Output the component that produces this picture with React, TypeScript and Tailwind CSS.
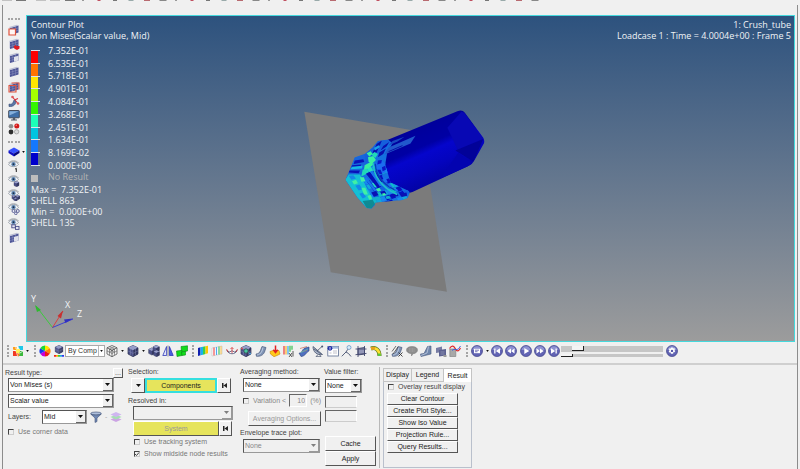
import React from 'react';

const ink = '#43486e';

/* ---------- icon drawings (12 x 12 grid) ---------- */

const Cube = ({ x = 0, y = 0, s = 1, lines = true }: { x?: number; y?: number; s?: number; lines?: boolean }) => (
  <g transform={`translate(${x} ${y}) scale(${s})`}>
    <path d="M6 .5 11 2.8V9L6 11.7 1 9V2.8Z" fill="#4b5088" stroke="#2d3050" strokeWidth=".7" />
    <path d="M6 .5 11 2.8 6 5.2 1 2.8Z" fill="#9aa0cc" />
    <path d="M6 5.2 11 2.8V9L6 11.7Z" fill="#343861" />
    {lines && (
      <path
        d="M1 5.9l5 2.5 5-2.5M3.5 4v6.3M8.5 4v6.3M3.5 1.7l5 2.3M8.5 1.7l-5 2.3M6 5.2v6.3"
        stroke="#8f94c0"
        strokeWidth=".4"
        fill="none"
      />
    )}
  </g>
);

const Sheet = ({ fill = '#4d5496' }: { fill?: string }) => (
  <g>
    <path d="M2 4 10.5 1.5V8.5L2 11Z" fill={fill} />
    <path d="M2 4 10.5 1.5 9 .8 1 3Z" fill="#b9bcd2" />
    <path d="M2 4v7L1 9.500V3Z" fill="#d4d6e4" />
    <path d="M4.8 3.2v7M7.6 2.4v7M2 6.3l8.5-2.4M2 8.6l8.5-2.4" stroke="#9ea3cc" strokeWidth=".4" />
  </g>
);

const Eye = () => (
  <g>
    <path d="M.5 4.5C2.5 1 8.5.5 10.5 4.5 8.5 7.3 2.5 7.3.5 4.5Z" fill="#eef1f5" stroke="#8d949e" strokeWidth=".8" />
    <circle cx="5.5" cy="4.2" r="2.1" fill="#5e87b4" />
    <circle cx="5.5" cy="4.2" r=".9" fill="#1c2c44" />
    <path d="M.5 3C2.5.2 8.5 0 10.5 3" fill="none" stroke="#8a8f98" strokeWidth=".8" />
  </g>
);

const Elbow = () => (
  <g>
    <path d="M1 9C3 9 4.500 8 5.500 5.500L7 1.500 11 2.500 9.500 7C8 10.500 5 11.500 1.500 11.300Z" fill="#7f93b5" stroke="#4b5a7c" strokeWidth=".7" />
    <path d="M8 2.500 7 6C5.500 9 4 9.800 2 10" fill="none" stroke="#c3d0e4" strokeWidth=".9" />
  </g>
);

const Disc = ({ children }: { children: React.ReactNode }) => (
  <g>
    <circle cx="6" cy="6" r="5.5" fill="#6264b4" stroke="#3c3f86" strokeWidth=".7" />
    <path d="M1.5 5A4.6 4.6 0 0 1 10.5 5Z" fill="#8f92d2" />
    <g fill="#fff">{children}</g>
  </g>
);

const art: Record<string, React.ReactNode> = {
  sheetFrame: <g><Sheet /><path d="M1 5h6.5v6H1Z" fill="#fff6f3" stroke="#e0523c" strokeWidth="1.2" /></g>,
  sheetRed: <g><Sheet /><path d="M5.5 8.5 8 6.8V8h3.5v2.5L9 12 6.5 10.8Z" fill="#dd1c22" /></g>,
  sheetHalf: <g><Sheet /><path d="M6 5 10.5 3.8V8.5L6 9.8Z" fill="#dfe0ea" /></g>,
  sheet: <Sheet />,
  sheetBox: <g><Sheet /><path d="M1 4.5h7v6.5H1ZM3.5 2H11v6.5" fill="none" stroke="#e0523c" strokeWidth="1.1" /></g>,
  arm: (
    <g>
      <path d="M1 9c3 1 4-1 5-4l2 1c0 3-2 6-7 5.5Z" fill="#5b76a8" stroke="#34496f" strokeWidth=".6" />
      <path d="M4.5 2 9.5 8M6.5 5 10 3.5" stroke="#d2303a" strokeWidth="1.1" />
      <circle cx="4.5" cy="2" r="1.3" fill="#e05a5a" /><circle cx="10" cy="8.5" r="1.3" fill="#e05a5a" />
    </g>
  ),
  monitor: (
    <g>
      <rect x=".7" y="1.5" width="10.6" height="7.3" rx=".6" fill="#3f6fa8" stroke="#3a4150" strokeWidth=".9" />
      <path d="M1.3 2.2h9.4L1.3 6.5Z" fill="#86b0dc" />
      <path d="M4.8 8.8h2.4v1.6H9v1H3v-1h1.800Z" fill="#565d68" />
    </g>
  ),
  balls: (
    <g>
      <circle cx="3" cy="3.3" r="2.3" fill="#8e8e8e" /><circle cx="8.8" cy="3" r="2.5" fill="#d21919" />
      <circle cx="3" cy="9" r="2.400" fill="#2e2e2e" /><circle cx="8.6" cy="8.8" r="2.2" fill="#dcdcdc" stroke="#777" strokeWidth=".5" />
      <circle cx="8.200" cy="2.2" r=".7" fill="#ff9d9d" />
    </g>
  ),
  gem: (
    <g>
      <path d="M6 1.500 11.500 4.500 6 7.500 .5 4.500Z" fill="#3450ff" />
      <path d="M.5 4.500 6 7.500V10.500L.5 7Z" fill="#1212c4" /><path d="M11.500 4.500 6 7.500V10.500L11.500 7Z" fill="#06067e" />
    </g>
  ),
  eyeOne: <g><Eye /><path d="M7 9.200 8.300 8.300V12" stroke="#222" strokeWidth="1" fill="none" /></g>,
  eyeCube: <g><Eye /><Cube x={5.5} y={6} s={0.5} lines={false} /></g>,
  eyeCubes: <g><Eye /><Cube x={3.5} y={6} s={0.4} lines={false} /><Cube x={7.5} y={6} s={0.4} lines={false} /><Cube x={5.5} y={8.2} s={0.35} lines={false} /></g>,
  eyeRings: (
    <g><Eye /><g fill="#e6e7f3" stroke="#484d88" strokeWidth=".8"><circle cx="5.500" cy="8" r="1.500" /><circle cx="9.800" cy="8" r="1.500" /><circle cx="7.800" cy="10.400" r="1.300" /></g></g>
  ),
  eyeSwap: <g><Eye /><g fill="#e6e7f3" stroke="#484d88" strokeWidth=".9"><rect x="3.800" y="6.800" width="3.500" height="3" /><rect x="7.500" y="8.400" width="3.500" height="3" /></g></g>,
  contourMesh: (
    <g>
      <path d="M1 2h4v3H1Z" fill="#ff9c1c" /><path d="M6 1h5v4H8Z" fill="#20c8e8" /><path d="M1 6h3l1 5H1Z" fill="#f23a24" />
      <path d="M4 4h4v4H4Z" fill="#fff35a" /><path d="M8 6h3v5H7Z" fill="#3cb83c" /><path d="M5 8l3 1-2 3Z" fill="#ff7b1c" />
      <path d="M4 0v4M8 8l3-2M1 5l3 1M6 1l-1 3" stroke="#fff" strokeWidth=".8" />
    </g>
  ),
  wheel: (
    <g>
      <path d="M6 6V.5A5.500 5.500 0 0 1 10.800 3.200Z" fill="#ffe600" /><path d="M6 6 10.800 3.200A5.500 5.500 0 0 1 10.800 8.800Z" fill="#ff8a00" />
      <path d="M6 6 10.800 8.800A5.500 5.500 0 0 1 6 11.500Z" fill="#f01818" /><path d="M6 6V11.500A5.500 5.500 0 0 1 1.200 8.800Z" fill="#c800d8" />
      <path d="M6 6 1.200 8.800A5.500 5.500 0 0 1 1.200 3.200Z" fill="#1838f0" /><path d="M6 6 1.200 3.200A5.500 5.500 0 0 1 6 .5Z" fill="#18d838" />
    </g>
  ),
  cubePalette: (
    <g>
      <Cube x={1.5} s={0.75} />
      <path d="M1 10h2v1.700H1Z" fill="#e22" /><path d="M3 10h2v1.700H3Z" fill="#fa0" /><path d="M5 10h2v1.700H5Z" fill="#3c3" />
      <path d="M7 10h2v1.700H7Z" fill="#2ad" /><path d="M9 10h2v1.700H9Z" fill="#33e" />
    </g>
  ),
  wireCube: (
    <g fill="none" stroke="#444" strokeWidth=".7">
      <path d="M6 .5 11 2.800V9L6 11.700 1 9V2.800ZM1 2.800l5 2.400 5-2.400M6 5.200v6.500" />
      <path d="M1 5.900l5 2.500 5-2.500M3.500 1.700l5 2.400v6M8.500 1.700l-5 2.400v6M3.500 7.200l5-3M8.500 7.200l-5-3" strokeWidth=".5" />
    </g>
  ),
  cube: <Cube />,
  cubes: <g><Cube y={2.5} s={0.65} lines={false} /><Cube x={4.5} y={0} s={0.62} lines={false} /><Cube x={5} y={5} s={0.58} lines={false} /></g>,
  mirror: <g><path d="M4.600 1.500V10.500H.8Z" fill="#dfe4fb" stroke="#3038b8" strokeWidth=".8" /><path d="M7.400 1.500V10.500h3.800Z" fill="#4a5ce0" stroke="#3038b8" strokeWidth=".8" /><path d="M6 .5v11" stroke="#555" strokeWidth=".6" /></g>,
  greens: <g fill="#12dc1c" stroke="#0a8a12" strokeWidth=".6"><path d="M5 1.500 11.500.8V6L5.500 7Z" /><path d="M.5 6 6 5.300V10.500L1 11.500Z" /><path d="M5.500 7 9.500 6.300V10L6 10.500Z" /></g>,
  bands: (
    <g><path d="M1 3 3.500 2.300V10.300L1 11Z" fill="#1020b0" /><path d="M3.500 2.300 6 1.800V9.700L3.500 10.300Z" fill="#18b0f0" /><path d="M6 1.800 8.500 1.300V9L6 9.700Z" fill="#38d048" /><path d="M8.500 1.300 11 .8V8.300L8.500 9Z" fill="#ffc800" /></g>
  ),
  isoBands: (
    <g><path d="M1 3 11 1V9L1 11Z" fill="#fff" stroke="#bbb" strokeWidth=".5" /><path d="M3 2.600v8" stroke="#f05050" strokeWidth="1.200" /><path d="M5.500 2v8" stroke="#50a8f0" strokeWidth="1.200" /><path d="M8 1.600v8" stroke="#48c058" strokeWidth="1.200" /><path d="M10 1.200v8" stroke="#f0b838" strokeWidth="1" /></g>
  ),
  vector: <g><path d="M.8 5.500C3 9.800 9 9.800 11.200 5.500L8.500 7 6 5.800 3.500 7Z" fill="#fff" stroke="#4a4a70" strokeWidth=".8" /><path d="M.5 4l1.500 3M6 2.500V8M11.500 4 10 7M4.500 4 6 2.500 7.500 4" stroke="#d83838" strokeWidth=".8" fill="none" /></g>,
  tensor: <g><Cube /><circle cx="6" cy="6" r="2.200" fill="#48c8a0" stroke="#223" strokeWidth=".6" /><circle cx="2" cy="3.500" r="1" fill="#e05858" /><circle cx="10" cy="8.500" r="1" fill="#58a8e0" /></g>,
  elbow: <Elbow />,
  iso: <g><path d="M1 6.500 4 5.500H10L11 9 8 10.500 5 11.700 1.500 9Z" fill="#ffc81c" stroke="#c88400" strokeWidth=".6" /><path d="M6.500.5v6.500M4.300 4.800l2.200 2.700 2.200-2.700" stroke="#e02020" strokeWidth="1.500" fill="none" /></g>,
  bandsFx: <g><path d="M1 1v8.500" stroke="#e83838" strokeWidth="1.200" /><path d="M3 1v8.500" stroke="#ffb828" strokeWidth="1.200" /><path d="M5 1v8.500" stroke="#38a8f0" strokeWidth="1.200" /><path d="M7 .8v6M9 .8v4" stroke="#38c050" strokeWidth="1.200" /><path d="M6 8l3 4M9 8l-3 4M10 6v5.500" stroke="#333" strokeWidth=".8" /></g>,
  deform: <g><path d="M1 8c3 1 3-4 6-5l4-1v4C8 7 8 11 3 11.500Z" fill="#5070c0" stroke="#28407c" strokeWidth=".6" /><path d="M2 3.500 9 1.500M4 6.500l5-1" stroke="#c86858" strokeWidth=".7" /><path d="M3 7.500l7-3.500" stroke="#58b8b0" strokeWidth=".9" /></g>,
  dish: <g><path d="M1 1.500C1 7 5 10.500 10.500 9.500Z" fill="#a9b4c8" stroke="#4a5670" strokeWidth=".8" /><path d="M5 6l5-4.500M6 9.500 4 11.700h5L7.500 9.500M2 4l7 5" stroke="#4a5670" strokeWidth=".8" fill="none" /><circle cx="10.200" cy="1.600" r="1" fill="#4a5670" /></g>,
  windowInfo: <g><rect x=".8" y="1.500" width="10.600" height="9.500" fill="#fff" stroke="#5b6c90" strokeWidth=".8" /><path d="M.8 1.500h10.600v2.200H.8Z" fill="#a8bce0" /><path d="M6 6h4M6 8h4M2.500 8h2" stroke="#99a" strokeWidth=".6" /><circle cx="3" cy="3.300" r="2.400" fill="#2430a8" /><path d="M3 2v2.700" stroke="#fff" strokeWidth=".8" /></g>,
  runner: <g fill="none"><circle cx="8" cy="2.500" r="2" stroke="#6a98c8" fill="#d8ecfa" strokeWidth=".8" /><path d="M6.800 4.300 5 7l2.500 1.500 2.500 3M5 7 3 9 .8 11.300" stroke="#56607c" strokeWidth="1" /></g>,
  nodes: <g><path d="M3 3.500 9.500 2.500V9L3 10Z" fill="#9498b8" stroke={ink} strokeWidth=".9" /><path d="M3 1v11M.5 4h11M9.500 1v10M.5 9.700l11-1.300" stroke={ink} strokeWidth=".9" /></g>,
  hose: <g fill="none"><path d="M1 3.500C6 2 9.500 5 9.500 11" stroke="#55751c" strokeWidth="4" /><path d="M1 3.500C6 2 9.500 5 9.500 11" stroke="#ffe030" strokeWidth="2.800" /><path d="M1 3.500c1.500-.5 3-.4 4 .1" stroke="#e8a020" strokeWidth="2.800" /><path d="M9.300 8.500 9.500 11" stroke="#58c838" strokeWidth="2.800" /></g>,
  elbowX: <g><Elbow /><path d="M1 6.500 5 1M2 9 7 2" stroke="#333" strokeWidth=".7" /><path d="M7.500 7.500l4 4M11.500 7.500l-4 4" stroke="#333" strokeWidth=".9" /></g>,
  note: <g><path d="M6 1.500C9.500 1.500 11.500 3 11.500 5S9.500 8.700 7 8.700L5.500 11V8.700C2.500 8.500.5 7 .5 5S2.500 1.500 6 1.500Z" fill="#8d8d8d" stroke="#777" strokeWidth=".5" /><path d="M3 4h6M3 6h6" stroke="#b4b4b4" strokeWidth=".7" strokeDasharray="1 .5" /></g>,
  ramp: <g><path d="M.5 9 4 8.500 7.500 1.500l3.500-.5v8L1 11.500Z" fill="#6f86ac" stroke="#46587c" strokeWidth=".6" /><path d="M8.500 1.500 7 8 1 10.500" stroke="#c0cce0" strokeWidth=".8" fill="none" /></g>,
  camera: <g><path d="M1 3 7 1.500V7L1 8Z" fill="#777ca4" /><path d="M4 5 11 4V10.500L4 11.500Z" fill="#5c6190" /><path d="M5.500 7h4M5.500 9h4" stroke="#a8abc8" strokeWidth=".6" /><path d="M8.500 10h3v2h-3Z" fill="#999" /></g>,
  curve: <g><path d="M.8 4h6v7.500h-6Z" fill="#a8a8a8" stroke="#7a7a7a" strokeWidth=".6" /><path d="M.5 3.500C3-.5 5 1 6.500 4S10 6.500 11.500 3" stroke="#e02828" strokeWidth="1.200" fill="none" /><path d="M3 5.500c3-3 5 2 8.500-4.500" stroke="#3858e0" strokeWidth=".9" fill="none" /></g>,
  film: <Disc><path d="M3 3.800h6v4.400H3Z" /><path d="M4 5.200h4M4 6.700h2.500" stroke="#5557a8" strokeWidth=".8" /></Disc>,
  first: <Disc><path d="M3.200 3.500h1.300v5H3.200ZM9 3.200v5.600L4.800 6Z" /></Disc>,
  rewind: <Disc><path d="M6 3.500v5L2.300 6ZM9.500 3.500v5L6 6Z" /></Disc>,
  play: <Disc><path d="M4.300 3v6L9.300 6Z" /></Disc>,
  forward: <Disc><path d="M6 3.500v5L9.700 6ZM2.500 3.500v5L6 6Z" /></Disc>,
  last: <Disc><path d="M7.500 3.500h1.300v5H7.500ZM3 3.200v5.600L7.200 6Z" /></Disc>,
  gear: <Disc><path d="M5.300 2.500h1.400l.3 1 1.200-.4.8 1.100-.7.900 1 .900-.8 1.300-1.100-.1-.3 1.500H4.900l-.2-1.300-1.300.1-.7-1.200.9-1-.7-.9.7-1.200 1.200.4Z" /><circle cx="6" cy="5.900" r="1.200" fill="#5557a8" /></Disc>,
  funnel: <g><ellipse cx="6" cy="2.500" rx="5.300" ry="1.500" fill="#aebfdc" stroke="#4a5c80" strokeWidth=".7" /><path d="M.7 3 5 7v4.500l2-1V7L11.300 3C9 4.500 3 4.500.7 3Z" fill="#6f88b4" stroke="#43557a" strokeWidth=".6" /></g>,
  layers: <g opacity=".75"><path d="M6 6 11.500 8.500 6 11 .5 8.500Z" fill="#c08be0" /><path d="M6 3.500 11.500 6 6 8.500 .5 6Z" fill="#8fd8a0" /><path d="M6 1 11.500 3.500 6 6 .5 3.500Z" fill="#c4a3f0" /></g>,
};

const Glyph = ({ name }: { name: string }) => (
  <svg viewBox="0 0 12 12" className="size-3 shrink-0" aria-hidden="true">{art[name]}</svg>
);

const Tool = ({ name }: { name: string }) => (
  <button type="button" aria-label={name} className="flex size-3 shrink-0 items-center justify-center">
    <Glyph name={name} />
  </button>
);

const Arrow = ({ faded = false }: { faded?: boolean }) => (
  <svg viewBox="0 0 5 3" className={faded ? 'h-[3px] w-[5px] shrink-0 opacity-50' : 'h-[3px] w-[5px] shrink-0'} aria-hidden="true">
    <path d="M0 0h5L2.500 3Z" fill="#111" />
  </svg>
);

const MiniArrow = () => (
  <svg viewBox="0 0 5 3" className="h-[2px] w-[5px] shrink-0" aria-hidden="true">
    <path d="M.5 0h4L2.500 3Z" fill="#111" />
  </svg>
);

const Grip = () => <div className="h-3 shrink-0 border-l-2 border-dotted border-[#a4a4a4]" />;
const SideGrip = () => <div className="w-3 shrink-0 border-t-2 border-dotted border-[#a4a4a4]" />;

/* ---------- form pieces ---------- */

const Combo = ({ label, value, className, disabled = false }: { label: string; value: string; className: string; disabled?: boolean }) => (
  <div className={`relative flex h-[14px] ${className}`}>
    <select
      aria-label={label}
      disabled={disabled}
      className={`h-full w-full appearance-none border border-t-[#555] border-l-[#555] border-r-[#999] border-b-[#999] px-px leading-3 ${disabled ? 'bg-[#f0f0f0] text-[#888]' : 'bg-white text-[#222]'}`}
    >
      <option>{value}</option>
    </select>
    <span className={`pointer-events-none absolute inset-y-px right-px flex w-[10px] items-center justify-center border-r border-b bg-[#f0f0f0] ${disabled ? 'border-[#999]' : 'border-[#666]'}`}>
      <Arrow faded={disabled} />
    </span>
  </div>
);

const bevel = 'border border-t-white border-l-white border-r-[#555] border-b-[#555]';
const picked = 'border-2 border-[#35dfdf]';

const Push = ({ children, className = '', label, edge = bevel }: { children: React.ReactNode; className?: string; label?: string; edge?: string }) => (
  <button type="button" aria-label={label} className={`flex shrink-0 items-center justify-center whitespace-nowrap ${edge} ${className}`}>
    {children}
  </button>
);

const Tick = ({ label, checked = false, className = 'text-[#777]' }: { label: string; checked?: boolean; className?: string }) => (
  <label className={`flex items-center gap-1 whitespace-nowrap ${className}`}>
    <span className="relative flex size-[6px]">
      <input type="checkbox" defaultChecked={checked} className="size-full appearance-none border border-t-[#444] border-l-[#444] border-r-[#ccc] border-b-[#ccc]" />
      {checked && (
        <svg viewBox="0 0 6 6" className="pointer-events-none absolute inset-0" aria-hidden="true">
          <path d="M1 3l1.500 1.500L5 1.500" fill="none" stroke="#444" />
        </svg>
      )}
    </span>
    {label}
  </label>
);

const SkipBack = () => (
  <svg viewBox="0 0 5 5" className="size-[5px]" aria-hidden="true"><path d="M0 0h1.500v5H0ZM5 0v5L1.500 2.500Z" fill="#222" /></svg>
);

/* ---------- scene ---------- */

const tones = ['#0710c0', '#1263e0', '#1788ee', '#12a8dc', '#10bcc8', '#25e0c0'];

/* Small shell elements scattered over the folded faces. */
const patches = (() => {
  let seed = 29;
  const rnd = () => ((seed = (seed * 16807) % 2147483647) / 2147483647);
  const out: { d: string; fill: string }[] = [];
  for (let i = 0; i < 13; i++) {
    for (let j = 0; j < 9; j++) {
      const x = 22 + i * 14 + j * 9;
      const y = 124 - i * 4 + j * 14;
      const r = rnd();
      if (r < 0.35) continue;
      const front = x < 95;
      const pick = front ? 2 + Math.floor(rnd() * 4) : Math.floor(rnd() * 5);
      out.push({ d: `M${x} ${y}l13 -5 8 12 -13 5Z`, fill: tones[pick] });
    }
  }
  return out;
})();

const Crumple = () => (
  <g transform="translate(340 132) scale(.3333)">
    <clipPath id="fold">
      <path d="M14 142 28 110 42 75 72 64 96 45 112 25 142 21 156 32 140 60 134 96 150 150 205 176 208 180 202 196 185 203 104 210 103 218 92 229 78 227 50 195Z" />
    </clipPath>
    <g clipPath="url(#fold)">
      <path d="M0 0h220v240H0Z" fill="#1470e0" />
      {patches.map((p, i) => <path key={i} d={p.d} fill={p.fill} />)}
      <path d="M28 110 42 75 72 64 84 80 64 124 24 126Z" fill="#1766dc" />
      <path d="M42 84l26-4 3 8-32 6ZM34 98l28-2-2 6-28 3ZM26 114l32 0-4 8-30-2Z" fill="#0912ba" />
      <path d="M34 103 66 100 64 108 30 110Z" fill="#16b8e4" />
      <path d="M72 66 96 45 112 25 142 21 150 28 120 52 104 74 90 92 74 90Z" fill="#1560dc" />
      <path d="M108 34 124 24 118 38 102 48ZM128 40 146 28 138 42 120 54ZM98 54l16-8-6 14-14 8ZM116 60l20-12-8 16-16 10Z" fill="#0810b0" />
      <path d="M100 46l14-8 4 5-14 10Z" fill="#18a0e8" />
      <path d="M78 62l12-6 6 8-10 8ZM82 74l16-4 8 12-10 10-12-4ZM72 98l18-10 10 6-16 14-14 4Z" fill="#38f0a0" />
      <path d="M66 112l14-4-2 16-16 8ZM92 66l10-8 10 6-8 12Z" fill="#20d8b8" />
      <path d="M14 142 24 126 58 126 70 150 96 200 92 229 78 227 50 195Z" fill="#14c0d4" />
      <path d="M24 130l14-2 8 10-14 4ZM44 160l12-4 10 14-12 4ZM56 184l12-4 8 14-10 4Z" fill="#1488e8" />
      <path d="M34 146l12-4 6 10-12 4ZM58 134l12 0 4 12-12 2ZM62 166l12 0 8 20-12 0ZM80 190l10-2 6 12-10 2Z" fill="#40f0a4" />
      <path d="M66 206 96 202 103 214 92 229 78 227Z" fill="#0f8a94" />
      <path d="M76 124l12-6 34 44-10 6ZM94 118l10-4 22 34-8 4ZM78 146l8-3 26 34-8 4Z" fill="#0710b4" />
      <path d="M88 118l8-4 28 44-6 4ZM72 138l6-4 32 42-6 4Z" fill="#1874ec" />
      <path d="M92 180l14-4 8 12-14 5ZM118 178l14-3 6 8-14 4ZM150 186l20-3 4 8-18 3ZM178 184l20-4 2 10-16 4Z" fill="#0912b4" />
      <path d="M92 196l24-4 6 8-24 4ZM134 192l12-2 6 8-14 2Z" fill="#12b0cc" />
      <path d="M106 170l10-4 6 8-10 4ZM124 184l8-2 4 6-8 2Z" fill="#40f0a4" />
    </g>
    <path d="M106 92 124 84 134 96 134 120 124 124 108 112Z" fill="#1c6cf0" />
    <path d="M112 84l12-2-2 10-12 4ZM124 104l10-4 2 12-10 4ZM110 112l10 0 6 14-10-2Z" fill="#0a18c8" />
    <path d="M98 92C98 128 122 166 170 186" fill="none" stroke="#20c0c8" strokeWidth="5" />
    <path d="M104 94C106 130 130 160 176 178" fill="none" stroke="#0a3cb8" strokeWidth="4" />
    <path d="M124 130l12 8 6 12-10-2ZM140 152l10 4 8 10-12-4ZM160 168l10 2 4 8-10-3Z" fill="#1c6cf0" />
  </g>
);

const Scene = () => (
  <svg viewBox="26 15 768 326" className="absolute inset-0 size-full" role="img" aria-label="Von Mises contour on crushed tube">
    <defs>
      <linearGradient id="tube" x1="415" y1="125" x2="440" y2="182" gradientUnits="userSpaceOnUse">
        <stop offset="0" stopColor="#00009a" /><stop offset=".35" stopColor="#0000a4" /><stop offset=".47" stopColor="#0505cc" />
        <stop offset=".7" stopColor="#0404be" /><stop offset="1" stopColor="#0202a0" />
      </linearGradient>
    </defs>
    <path d="M303.500 111 412 129.500 430 187 446.500 291.500 330 272Z" fill="#7b7b7b" />
    <path d="M376 145 388 139 457 110.500Q462 108.500 464.500 112L483 137Q485 141 483 144L474 160Q472 164 467 166L412 191.500Q402 195 392 191L374 168Z" fill="url(#tube)" />
    <path d="M447 127 461 111 464 112 483 138 458 151Z" fill="#0808b4" />
    <path d="M455 150 483 138.500 473 161Z" fill="#020298" />
    <path d="M458 152 472 163 467 166 440 178Z" fill="#0303b0" />
    <Crumple />
    <path d="M388 147 415 135 410 143 384 154Z" fill="#2158cc" />
    <path d="M392 140.500 404 136 397 141 388 145Z" fill="#1848c0" />
    <path d="M388 151 402 145" stroke="#0710a8" strokeWidth="1" />
  </svg>
);

const Triad = () => (
  <svg viewBox="0 0 60 42" className="absolute bottom-[6px] left-0 h-[42px] w-[60px]" aria-label="Axis triad">
    <path d="M25.500 34.500 9 13" stroke="#25d825" strokeWidth=".8" /><path d="M8 12l2 7 4-2Z" fill="#30b830" />
    <path d="M25.500 34.500 36 18" stroke="#e82828" strokeWidth=".8" /><path d="M36 17.500 30.500 23l3.500 2.500Z" fill="#c83030" />
    <path d="M25.500 34.500 46 26" stroke="#2828e0" strokeWidth=".8" /><path d="M46 25.500l-9 1 1.500 3.500Z" fill="#3030c0" />
    <g fill="#f2f4f6" fontSize="9" className="font-['Open_Sans','Noto_Sans',sans-serif]">
      <text x="4" y="9">Y</text><text x="38" y="15">X</text><text x="50" y="24">Z</text>
    </g>
  </svg>
);

const legend: { value: string; tone: string }[] = [
  { value: '7.352E-01', tone: 'bg-[#ff0000]' },
  { value: '6.535E-01', tone: 'bg-[#ff7300]' },
  { value: '5.718E-01', tone: 'bg-[#ffe600]' },
  { value: '4.901E-01', tone: 'bg-[#a5ff00]' },
  { value: '4.084E-01', tone: 'bg-[#33f500]' },
  { value: '3.268E-01', tone: 'bg-[#1cffb8]' },
  { value: '2.451E-01', tone: 'bg-[#00c4e0]' },
  { value: '1.634E-01', tone: 'bg-[#1478ff]' },
  { value: '8.169E-02', tone: 'bg-[#0000cc]' },
];

const Viewport = () => (
  <main className="relative min-w-0 flex-1 overflow-hidden border border-[#45d9dd] bg-linear-to-b from-[#2d527e] to-[#9c9c9c] font-['Open_Sans','Noto_Sans',sans-serif] text-[9px] leading-[11px] text-[#f0f3f6]">
    <Scene />
    <div className="relative flex justify-between pt-[3px] pr-[3px] pl-1">
      <div>
        <p>Contour Plot</p>
        <p>Von Mises(Scalar value, Mid)</p>
        <div className="mt-[3px] flex h-[128px] gap-2">
          <div className="flex w-[9px] flex-col py-[6px]">
            {legend.map((l) => (
              <div key={l.value} className="flex flex-1 flex-col border-t border-[#dde3ea]">
                <div className={`w-[7px] flex-1 ${l.tone}`} />
              </div>
            ))}
            <div className="border-t border-[#dde3ea]" />
          </div>
          <div className="flex flex-col">
            {legend.map((l) => <div key={l.value} className="flex flex-1 items-center">{l.value}</div>)}
            <div className="flex flex-1 items-center">0.000E+00</div>
          </div>
        </div>
        <div className="flex h-[10px] items-end gap-[10px] text-[#b4b4b4]">
          <span className="size-[7px] bg-[#bdbdbd]" /><span className="leading-[10px]">No Result</span>
        </div>
        <div className="mt-[2px] whitespace-pre">
          <p>Max =  7.352E-01</p>
          <p>SHELL 863</p>
          <p>Min =  0.000E+00</p>
          <p>SHELL 135</p>
        </div>
      </div>
      <div className="text-right">
        <p>1: Crush_tube</p>
        <p>Loadcase 1 : Time = 4.0004e+00 : Frame 5</p>
      </div>
    </div>
    <Triad />
  </main>
);

/* ---------- bars ---------- */

const upper = ['sheetFrame', 'sheetRed', 'sheetHalf', 'sheet', 'sheetBox', 'arm', 'monitor', 'balls'];
const lower = ['eyeOne', 'eyeCube', 'eyeCubes', 'eyeRings', 'eyeSwap', 'sheetHalf'];
const results = ['bands', 'isoBands', 'vector', 'tensor', 'elbow', 'iso', 'bandsFx', 'deform', 'dish', 'windowInfo', 'runner', 'nodes', 'hose'];
const notes = ['elbowX', 'note', 'ramp', 'camera', 'curve'];
const player = ['first', 'rewind', 'play', 'forward', 'last'];

const Sidebar = () => (
  <aside className="flex w-[23px] shrink-0 flex-col pt-[3px] pl-[5px]">
    <SideGrip />
    <div className="mt-1 flex h-[111px] flex-col justify-between">
      {upper.map((n) => <Tool key={n} name={n} />)}
    </div>
    <div className="mt-[6px]"><SideGrip /></div>
    <div className="mt-[3px] flex h-[98px] flex-col justify-between">
      <div className="flex items-center gap-px"><Tool name="gem" /><MiniArrow /></div>
      {lower.map((n) => <Tool key={n} name={n} />)}
    </div>
  </aside>
);

const scraps = Array.from({ length: 30 }, (_, i) => ({
  x: 82 + i * 15.5,
  w: 2 + ((i * 7) % 6),
  fill: ['#999', '#c05060', '#777', '#9aa', '#b86a70', '#888'][i % 6],
}));

const TopEdge = () => (
  <svg className="h-[2px] w-full shrink-0" aria-hidden="true">
    {[2, 36, 50].map((x) => <rect key={x} x={x} y="0" width="10" height="1" fill="#c2c2c2" />)}
    {[16, 65].map((x) => <rect key={x} x={x} y="0" width="10" height="1" fill="#777" />)}
    {scraps.map((s) => <rect key={s.x} x={s.x} y="0" width={s.w} height="1" fill={s.fill} />)}
  </svg>
);

const Toolbar = () => (
  <nav className="flex h-[18px] shrink-0 items-center pl-1">
    <Grip />
    <div className="ml-[3px] flex w-[20px] items-center gap-px"><Tool name="contourMesh" /><MiniArrow /></div>
    <div className="ml-[2px]"><Grip /></div>
    <div className="ml-[3px] flex items-center gap-[2px]"><Tool name="wheel" /><Tool name="cubePalette" /></div>
    <div className="relative flex h-3">
      <select aria-label="Color by" className="w-[40px] appearance-none border border-[#aaa] bg-white pl-[2px] text-[7px] leading-[10px] text-[#333]"><option>By Comp</option></select>
      <span className="pointer-events-none absolute inset-y-px right-px flex w-[6px] items-center justify-center border-l border-[#bbb] bg-white"><MiniArrow /></span>
    </div>
    <div className="ml-px flex items-center gap-[2px]"><Tool name="wireCube" /><MiniArrow /><Tool name="cube" /><MiniArrow /></div>
    <div className="ml-[2px] flex w-[40px] items-center justify-between"><Tool name="cubes" /><Tool name="mirror" /><Tool name="greens" /></div>
    <div className="ml-1"><Grip /></div>
    <div className="ml-[3px] flex w-[185px] items-center justify-between">{results.map((n) => <Tool key={n} name={n} />)}</div>
    <div className="ml-1"><Grip /></div>
    <div className="ml-[3px] flex w-[70px] items-center justify-between">{notes.map((n) => <Tool key={n} name={n} />)}</div>
    <div className="ml-[5px]"><Grip /></div>
    <div className="ml-[3px] flex items-center gap-[2px]"><Tool name="film" /><MiniArrow /></div>
    <div className="ml-px flex w-[69px] items-center justify-between">{player.map((n) => <Tool key={n} name={n} />)}</div>
    <div className="ml-px flex w-[102px] flex-col gap-[2px]">
      <input
        type="range" aria-label="Frame" defaultValue={12}
        className="h-[6px] w-full appearance-none bg-[#c6c6c6] [&::-webkit-slider-thumb]:h-[5px] [&::-webkit-slider-thumb]:w-3 [&::-webkit-slider-thumb]:appearance-none [&::-webkit-slider-thumb]:border-r [&::-webkit-slider-thumb]:border-b [&::-webkit-slider-thumb]:border-[#222] [&::-webkit-slider-thumb]:bg-[#f4f4f4]"
      />
      <input
        type="range" aria-label="Speed" defaultValue={0}
        className="h-[3px] w-full appearance-none bg-[#c6c6c6] [&::-webkit-slider-thumb]:h-[3px] [&::-webkit-slider-thumb]:w-3 [&::-webkit-slider-thumb]:appearance-none [&::-webkit-slider-thumb]:border-r [&::-webkit-slider-thumb]:border-b [&::-webkit-slider-thumb]:border-[#222] [&::-webkit-slider-thumb]:bg-[#f4f4f4]"
      />
    </div>
    <div className="ml-[3px] flex"><Tool name="gear" /></div>
  </nav>
);

/* ---------- bottom panel ---------- */

const Panel = () => (
  <section className="flex shrink-0 items-start border-t-2 border-[#cfcfcf] pt-[2px] pb-px pl-[2px] text-[7px] leading-[10px] text-[#444]">
    <div className="flex w-[118px] flex-col">
      <div className="flex h-[11px] items-center justify-between">
        <span>Result type:</span>
        <Push className="h-[10px] w-[10px] leading-[6px]">...</Push>
      </div>
      <div className="flex flex-col gap-[2px] pl-[3px]">
        <Combo label="Result type" value="Von Mises (s)" className="w-[106px]" />
        <Combo label="Component" value="Scalar value" className="w-[106px]" />
        <div className="flex items-center">
          <span className="w-[34px]">Layers:</span>
          <Combo label="Layers" value="Mid" className="w-[45px]" />
          <div className="ml-[3px] flex items-center gap-[3px]"><Tool name="funnel" /><span className="text-[#aaa]">-</span><Tool name="layers" /></div>
        </div>
      </div>
      <div className="mt-[3px] pl-[3px]"><Tick label="Use corner data" /></div>
    </div>

    <div className="ml-[5px] flex w-[106px] flex-col">
      <span className="h-[11px]">Selection:</span>
      <div className="flex h-[15px] pl-[3px]">
        <Push label="Selection type" className="w-[14px]"><Arrow /></Push>
        <Push edge={picked} className="w-[72px] bg-[#e6e45c] text-[#222]">Components</Push>
        <Push label="Reset selection" className="w-[14px]"><SkipBack /></Push>
      </div>
      <span className="mt-[3px] h-[10px]">Resolved in:</span>
      <div className="flex flex-col gap-px pl-[5px]">
        <Combo label="Resolved in" value="" className="w-[100px]" disabled />
        <div className="flex h-[15px]">
          <Push className="w-[86px] bg-[#e6e45c] text-[#999]">System</Push>
          <Push label="Reset system" className="w-[13px]"><SkipBack /></Push>
        </div>
      </div>
      <div className="mt-px flex flex-col gap-[2px] pl-[6px]">
        <Tick label="Use tracking system" />
        <Tick label="Show midside node results" checked />
      </div>
    </div>

    <div className="ml-[6px] flex w-[82px] flex-col">
      <span className="h-[11px]">Averaging method:</span>
      <div className="flex flex-col pl-[3px]">
        <Combo label="Averaging method" value="None" className="w-[77px]" />
        <div className="mt-[2px] flex h-[13px] items-center gap-[3px] text-[#888]">
          <Tick label="Variation <" className="text-[#888]" />
          <input aria-label="Variation percent" defaultValue="10" className="h-[13px] w-[18px] border border-t-[#666] border-l-[#666] border-r-white border-b-white pr-px text-right" />
          <span>(%)</span>
        </div>
        <Push className="mt-1 ml-[5px] h-[15px] w-[73px] text-[#999]">Averaging Options...</Push>
      </div>
      <span className="mt-[2px] h-[11px] whitespace-nowrap">Envelope trace plot:</span>
      <div className="pl-[3px]"><Combo label="Envelope trace plot" value="None" className="w-[77px]" disabled /></div>
    </div>

    <div className="ml-[2px] flex w-[53px] flex-col">
      <span className="h-3">Value filter:</span>
      <div className="flex flex-col gap-[2px] pl-px">
        <Combo label="Value filter" value="None" className="w-[37px]" />
        <input aria-label="Filter minimum" className="mt-px h-3 w-[32px] border border-t-[#666] border-l-[#666] border-r-white border-b-[#ccc]" />
        <input aria-label="Filter maximum" className="h-3 w-[32px] border border-t-[#666] border-l-[#666] border-r-white border-b-[#ccc]" />
      </div>
      <Push className="mt-[14px] ml-px h-[15px] w-[51px] text-[#222]">Cache</Push>
      <Push className="ml-px h-[15px] w-[51px] text-[#222]">Apply</Push>
    </div>

    <div className="ml-[2px] h-[101px] border-l border-[#b8b8b8]" />

    <div className="ml-[3px] flex h-[101px] w-[89px] flex-col text-[#222]">
      <div role="tablist" className="mt-px flex h-[14px] shrink-0">
        <button type="button" role="tab" className="w-[29px] border border-[#c4c4c4]">Display</button>
        <button type="button" role="tab" className="w-[31px] border-y border-[#c4c4c4]">Legend</button>
        <button type="button" role="tab" aria-selected="true" className="w-[29px] border border-b-0 border-[#c4c4c4] bg-white">Result</button>
      </div>
      <div className="flex flex-1 flex-col border-x border-b border-[#b9c0cc] pl-[3px]">
        <div className="pl-px"><Tick label="Overlay result display" className="text-[#444]" /></div>
        <div className="mt-px flex w-[71px] flex-col">
          {['Clear Contour', 'Create Plot Style...', 'Show Iso Value', 'Projection Rule...', 'Query Results...'].map((t) => (
            <Push key={t} className="h-3 leading-[10px]">{t}</Push>
          ))}
        </div>
      </div>
    </div>
  </section>
);

export default function App() {
  return (
    <div className="flex h-screen min-h-[469px] flex-col overflow-hidden bg-[#f0f0f0] font-['Liberation_Sans',Arial,sans-serif]">
      <TopEdge />
      <div className="mt-[3px] mr-[2px] ml-[2px] flex min-h-0 flex-1 flex-col border-x border-[#8c8c8c] pt-[10px]">
        <div className="flex min-h-0 flex-1 pr-[2px]">
          <Sidebar />
          <Viewport />
        </div>
        <Toolbar />
        <div className="h-[3px] shrink-0" />
        <Panel />
      </div>
    </div>
  );
}
